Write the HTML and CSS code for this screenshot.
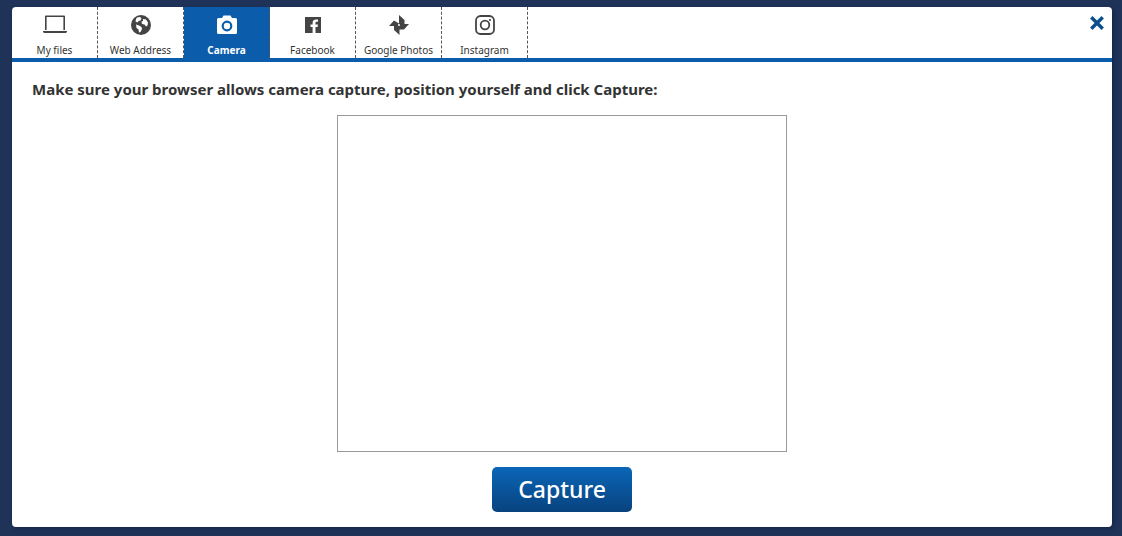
FILE: index.html
```html
<!DOCTYPE html>
<html>
<head>
<title>Upload</title>
<link rel="stylesheet" href="styles.css">
</head>
<body>
<div class="dialog">
  <div class="tabs">
    <div class="tab">
      <svg class="icon" viewBox="0 0 24 24"><path fill="#444" d="M3 2.5h18a1 1 0 0 1 1 1V17h-1.6V4.100H3.600V17H2V3.500a1 1 0 0 1 1-1zM0 18h24v.6a1.400 1.400 0 0 1-1.400 1.400H1.400A1.400 1.400 0 0 1 0 18.600z"/></svg>
      <span>My files</span>
    </div>
    <div class="tab">
      <svg class="icon" viewBox="0 0 24 24"><circle cx="12" cy="12" r="10" fill="#444"/><path fill="#fff" d="M8 4.500l3-.5 1.500 1.500-1 2-2 .5-1 1.500-2-1 .5-2.500zM14 6l3 .5 2 3-.5 3-1.500 1-1.500-2-2.500-.5-.5-2.500 1.500-.5zM7 11.500l3 1 2.500 1.500.5 2-1.500 3-1.500.5-.5-3-2-1.500z"/></svg>
      <span>Web Address</span>
    </div>
    <div class="tab active">
      <svg class="icon" viewBox="0 0 24 24"><path fill="#fff" d="M8.500 2.500h7l1.500 2.500h3.500a1.500 1.500 0 0 1 1.500 1.500v13a1.500 1.500 0 0 1-1.500 1.500h-17A1.500 1.500 0 0 1 2 19.500v-13A1.500 1.500 0 0 1 3.500 5H7z"/><circle cx="12" cy="13" r="4.300" fill="none" stroke="#0b5cab" stroke-width="2.200"/></svg>
      <span>Camera</span>
    </div>
    <div class="tab">
      <svg class="icon" viewBox="0 0 24 24"><path fill="#444" d="M4 4h16v16h-5.500v-6h2.100l.4-2.500h-2.500V10c0-.8.3-1.200 1.200-1.200H17V6.500h-2.100c-2.200 0-3.300 1.300-3.300 3.300v1.700H9.500V14h2.100v6H4z"/></svg>
      <span>Facebook</span>
    </div>
    <div class="tab">
      <svg class="icon" viewBox="0 0 24 24"><path fill="#444" d="M12 10.500V2l5.500 5v4h4.500l-5 5.500h-4.500v5.500l-5.500-5v-4H2l5-5.500z"/><circle cx="12" cy="12" r="1" fill="#fff"/></svg>
      <span>Google Photos</span>
    </div>
    <div class="tab">
      <svg class="icon" viewBox="0 0 24 24"><rect x="3" y="3" width="18" height="18" rx="4.500" fill="none" stroke="#444" stroke-width="1.800"/><circle cx="12" cy="12" r="4.300" fill="none" stroke="#444" stroke-width="1.800"/><circle cx="17" cy="7" r="1.100" fill="#444"/></svg>
      <span>Instagram</span>
    </div>
  </div>
  <div class="close">
    <svg viewBox="0 0 14 14"><path d="M2 2l10 10M12 2L2 12" stroke="#0b4f8c" stroke-width="3" fill="none"/></svg>
  </div>
  <div class="body">
    <p class="hint">Make sure your browser allows camera capture, position yourself and click Capture:</p>
    <div class="preview"></div>
    <div class="btn">Capture</div>
  </div>
</div>
</body>
</html>
```

FILE: styles.css
```css
html,body{
height:100%;}
body{
margin:0;
background-color:#1f3358;
font-family:"Noto Sans",sans-serif;
color:#333;
padding:7px 10px 9px 12px;
box-sizing:border-box;
overflow:hidden;}
.dialog{
position:relative;
height:520px;
background-color:white;
border-radius:4px;
box-shadow:2px 2px 4px #17264a;}
.tabs{
display:flex;
height:51px;
border-bottom:4px solid #0b5cab;}
.tab{
width:85px;
border-right:1px dashed #555;
display:flex;
flex-direction:column;
align-items:center;
font-size:10px;
color:#333;}
.tab span{
margin-top:6px;
line-height:14px;}
.icon{
width:24px;
height:24px;
margin-top:6px;}
.active{
background-color:#0b5cab;
color:white;
font-weight:bold;}
.close{
position:absolute;
top:8px;
right:7px;
width:16px;
height:16px;}
.close svg{
display:block;
width:16px;
height:16px;}
.body{
display:flex;
flex-direction:column;
align-items:center;}
.hint{
align-self:flex-start;
margin:17px 0 0 20px;
font-size:15px;
line-height:20px;
font-weight:bold;
color:#333;}
.preview{
width:448px;
height:335px;
margin-top:16px;
border:1px solid #999;}
.btn{
width:140px;
height:45px;
margin-top:15px;
border-radius:5px;
background:linear-gradient(#0b66b8,#08427e);
color:white;
font-size:23px;
font-weight:500;
text-align:center;
line-height:44px;}
```
